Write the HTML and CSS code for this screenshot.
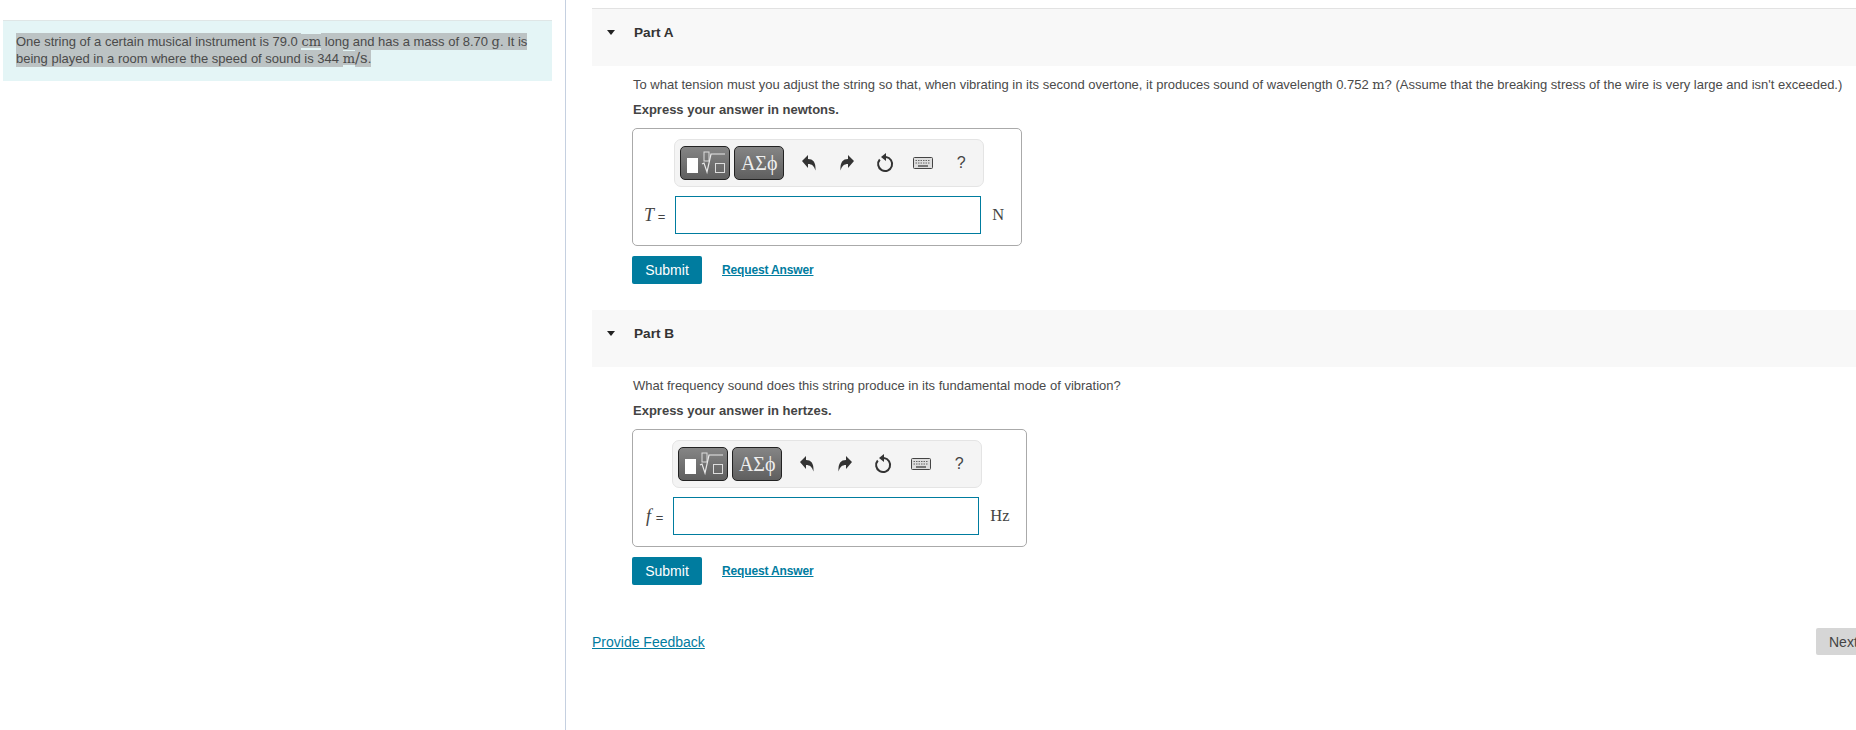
FILE: index.html
```html
<!DOCTYPE html>
<html lang="en">
<head>
    <meta charset="UTF-8">
    <meta name="viewport" content="width=device-width, initial-scale=1.0">
    <title>Item</title>
    <link rel="stylesheet" href="styles.css">
</head>
<body>
    <div class="page">
        <div class="left-col">
            <div class="intro">
                <p><span class="hl">One string of a certain musical instrument is 79.0 <span class="math unit-mark">cm</span> long and has a mass of 8.70 <span class="math">g</span>. It is</span><br>
                <span class="hl">being played in a room where the speed of sound is 344 <span class="math unit-mark">m</span><span class="math slash">/s</span>.</span></p>
            </div>
        </div>

        <div class="right-col">
            <div class="part first">
                <div class="part-head"><span class="caret"></span><h3>Part A</h3></div>
                <p class="question">To what tension must you adjust the string so that, when vibrating in its second overtone, it produces sound of wavelength 0.752 <span class="math">m</span>? (Assume that the breaking stress of the wire is very large and isn't exceeded.)</p>
                <p class="hint">Express your answer in newtons.</p>
                <div class="answer-box">
                    <div class="toolbar">
                        <button class="tool-btn"><svg width="50" height="34" viewBox="0 0 50 34"><rect x="7" y="12" width="11" height="15" fill="#fff"/><rect x="24" y="6" width="5" height="9" fill="none" stroke="#ddd"/><path d="M22 18l2-1 3 9 4-18h14" fill="none" stroke="#e8e8e8" stroke-width="1.2"/><rect x="35.500" y="17.500" width="9" height="9" fill="none" stroke="#ddd"/></svg></button>
                        <button class="tool-btn greek">ΑΣϕ</button>
                        <div class="tool-icons">
                            <span class="tool-cell"><svg width="14" height="16" viewBox="0 0 14 16"><path d="M0 6l6-6v4c5 0 8 3 7.500 11.500C12 11 10 9 6 9v4z" fill="#333"/></svg></span>
                            <span class="tool-cell"><svg width="14" height="16" viewBox="0 0 14 16"><path d="M14 6L8 0v4C3 4 0 7 .5 15.500 2 11 4 9 8 9v4z" fill="#333"/></svg></span>
                            <span class="tool-cell"><svg width="18" height="20" viewBox="0 0 18 20"><path d="M3.800 6.500A7 7 0 1 0 10 4.100" fill="none" stroke="#333" stroke-width="2"/><path d="M10 0v8L5 4z" fill="#333"/></svg></span>
                            <span class="tool-cell"><svg width="20" height="12" viewBox="0 0 20 12"><rect x=".5" y=".5" width="19" height="11" rx="1" fill="#ddd" stroke="#444"/><path d="M2.500 3.500h15M2.500 6h15" stroke="#666" stroke-dasharray="1.500 1"/><path d="M5 9h10" stroke="#555" stroke-width="1.500"/></svg></span>
                            <span class="tool-cell help">?</span>
                        </div>
                    </div>
                    <span class="var"><i>T</i> =</span>
                    <input class="answer-input" type="text">
                    <span class="unit">N</span>
                </div>
                <div class="actions">
                    <button class="submit">Submit</button>
                    <a class="request" href="#">Request Answer</a>
                </div>
            </div>

            <div class="part">
                <div class="part-head"><span class="caret"></span><h3>Part B</h3></div>
                <p class="question">What frequency sound does this string produce in its fundamental mode of vibration?</p>
                <p class="hint">Express your answer in hertzes.</p>
                <div class="answer-box">
                    <div class="toolbar">
                        <button class="tool-btn"><svg width="50" height="34" viewBox="0 0 50 34"><rect x="7" y="12" width="11" height="15" fill="#fff"/><rect x="24" y="6" width="5" height="9" fill="none" stroke="#ddd"/><path d="M22 18l2-1 3 9 4-18h14" fill="none" stroke="#e8e8e8" stroke-width="1.2"/><rect x="35.500" y="17.500" width="9" height="9" fill="none" stroke="#ddd"/></svg></button>
                        <button class="tool-btn greek">ΑΣϕ</button>
                        <div class="tool-icons">
                            <span class="tool-cell"><svg width="14" height="16" viewBox="0 0 14 16"><path d="M0 6l6-6v4c5 0 8 3 7.500 11.500C12 11 10 9 6 9v4z" fill="#333"/></svg></span>
                            <span class="tool-cell"><svg width="14" height="16" viewBox="0 0 14 16"><path d="M14 6L8 0v4C3 4 0 7 .5 15.500 2 11 4 9 8 9v4z" fill="#333"/></svg></span>
                            <span class="tool-cell"><svg width="18" height="20" viewBox="0 0 18 20"><path d="M3.800 6.500A7 7 0 1 0 10 4.100" fill="none" stroke="#333" stroke-width="2"/><path d="M10 0v8L5 4z" fill="#333"/></svg></span>
                            <span class="tool-cell"><svg width="20" height="12" viewBox="0 0 20 12"><rect x=".5" y=".5" width="19" height="11" rx="1" fill="#ddd" stroke="#444"/><path d="M2.500 3.500h15M2.500 6h15" stroke="#666" stroke-dasharray="1.500 1"/><path d="M5 9h10" stroke="#555" stroke-width="1.500"/></svg></span>
                            <span class="tool-cell help">?</span>
                        </div>
                    </div>
                    <span class="var"><i class="fn">f</i> =</span>
                    <input class="answer-input" type="text">
                    <span class="unit">Hz</span>
                </div>
                <div class="actions">
                    <button class="submit">Submit</button>
                    <a class="request" href="#">Request Answer</a>
                </div>
            </div>

            <div class="footer">
                <a class="feedback" href="#">Provide Feedback</a>
                <button class="next">Next</button>
            </div>
        </div>
    </div>
</body>
</html>
```

FILE: styles.css
```css
/* layout */
html, body { margin: 0; height: 100%; overflow: hidden; background: #fff; }
body { font-family: "Liberation Sans", Arial, sans-serif; color: #4a4a4a; }
.page { display: flex; width: 1876px; height: 730px; }
.left-col { width: 565px; flex: none; border-right: 1px solid #c5d0e0; }
.right-col { width: 1284px; flex: none; padding: 8px 0 0 26px; }

/* left panel */
.intro { margin: 20px 13px 0 3px; padding: 12px 13px 14px; background: #e4f5f6; border-top: 1px solid #dfe6e6; font-size: 13px; line-height: 17px; height: 34px; }
.intro p { margin: 0; white-space: nowrap; }
.hl { background: #bcc3c4; padding: 1px 0; }
.math { font-family: "DejaVu Serif", "Liberation Serif", serif; font-size: 13px; line-height: 1; }
.slash { font-size: 15px; }
.unit-mark { background: linear-gradient(#e4f5f6 0 1px, #bcc3c4 1px calc(100% - 2px), #e4f5f6 calc(100% - 2px)); padding: 1px 0; }

/* parts */
.part { margin-top: 26px; }
.part.first { margin-top: 0; border-top: 1px solid #e2e2e2; }
.part-head { display: flex; align-items: center; height: 57px; padding: 0 0 10px 15px; box-sizing: border-box; background: #f8f8f8; }
.part-head h3 { margin: 0 0 0 19px; font-size: 13.6px; color: #333; }
.caret { width: 0; height: 0; border-left: 4.500px solid transparent; border-right: 4.500px solid transparent; border-top: 5px solid #222; }
.question { margin: 10px 0 0 41px; font-size: 13px; line-height: 17px; white-space: nowrap; }
.hint { margin: 8px 0 0 41px; font-size: 13px; line-height: 17px; font-weight: bold; color: #444; }

/* answer box */
.answer-box { display: inline-grid; grid-template-columns: auto 306px auto; column-gap: 10px; align-items: center; margin: 10px 0 0 40px; padding: 10px 17px 11px 11px; border: 1px solid #aaa; border-radius: 5px; }
.toolbar { grid-column: 2; display: flex; align-items: center; width: 298px; height: 46px; margin: 0 0 9px -1px; padding: 0 5px; background: #f4f4f4; border: 1px solid #e4e4e4; border-radius: 7px; }
.tool-btn { display: flex; align-items: center; justify-content: center; flex: none; width: 50px; height: 34px; margin-right: 4px; padding: 0; background: linear-gradient(#858585, #5f5f5f); border: 1px solid #222; border-radius: 5px; }
.tool-btn svg { display: block; flex: none; }
.greek { font-family: "Liberation Serif", serif; font-size: 20px; color: #eee; }
.tool-icons { display: flex; align-items: center; padding-left: 2px; }
.tool-cell { display: flex; align-items: center; justify-content: center; width: 38px; }
.tool-cell svg { display: block; }
.help { font-size: 16px; color: #444; }
.var { grid-row: 2; font-size: 13px; color: #444; white-space: nowrap; }
.var i { font-family: "Liberation Serif", serif; font-size: 18px; }
.var i.fn { padding: 0 1px 0 2px; }
.answer-input { grid-row: 2; width: 306px; height: 38px; box-sizing: border-box; border: 1px solid #007c9f; border-radius: 0; padding: 0; }
.unit { grid-row: 2; margin-left: 1px; font-family: "Liberation Serif", serif; font-size: 16.5px; color: #444; }

/* actions */
.actions { display: flex; align-items: center; margin: 10px 0 0 40px; }
.submit { width: 70px; height: 28px; padding: 0; background: #007c9f; color: #fff; border: 0; border-radius: 2px; font: 14px "Liberation Sans", Arial, sans-serif; }
.request { margin-left: 20px; font-size: 12px; letter-spacing: -.15px; font-weight: bold; color: #007c9f; }

/* footer */
.footer { display: flex; justify-content: space-between; align-items: center; margin-top: 43px; }
.feedback { font-size: 14px; color: #007c9f; }
.next { width: 60px; height: 27px; padding: 0 0 0 13px; background: #d6d6d6; color: #444; border: 0; border-radius: 2px; text-align: left; font: 14px "Liberation Sans", Arial, sans-serif; }
```
